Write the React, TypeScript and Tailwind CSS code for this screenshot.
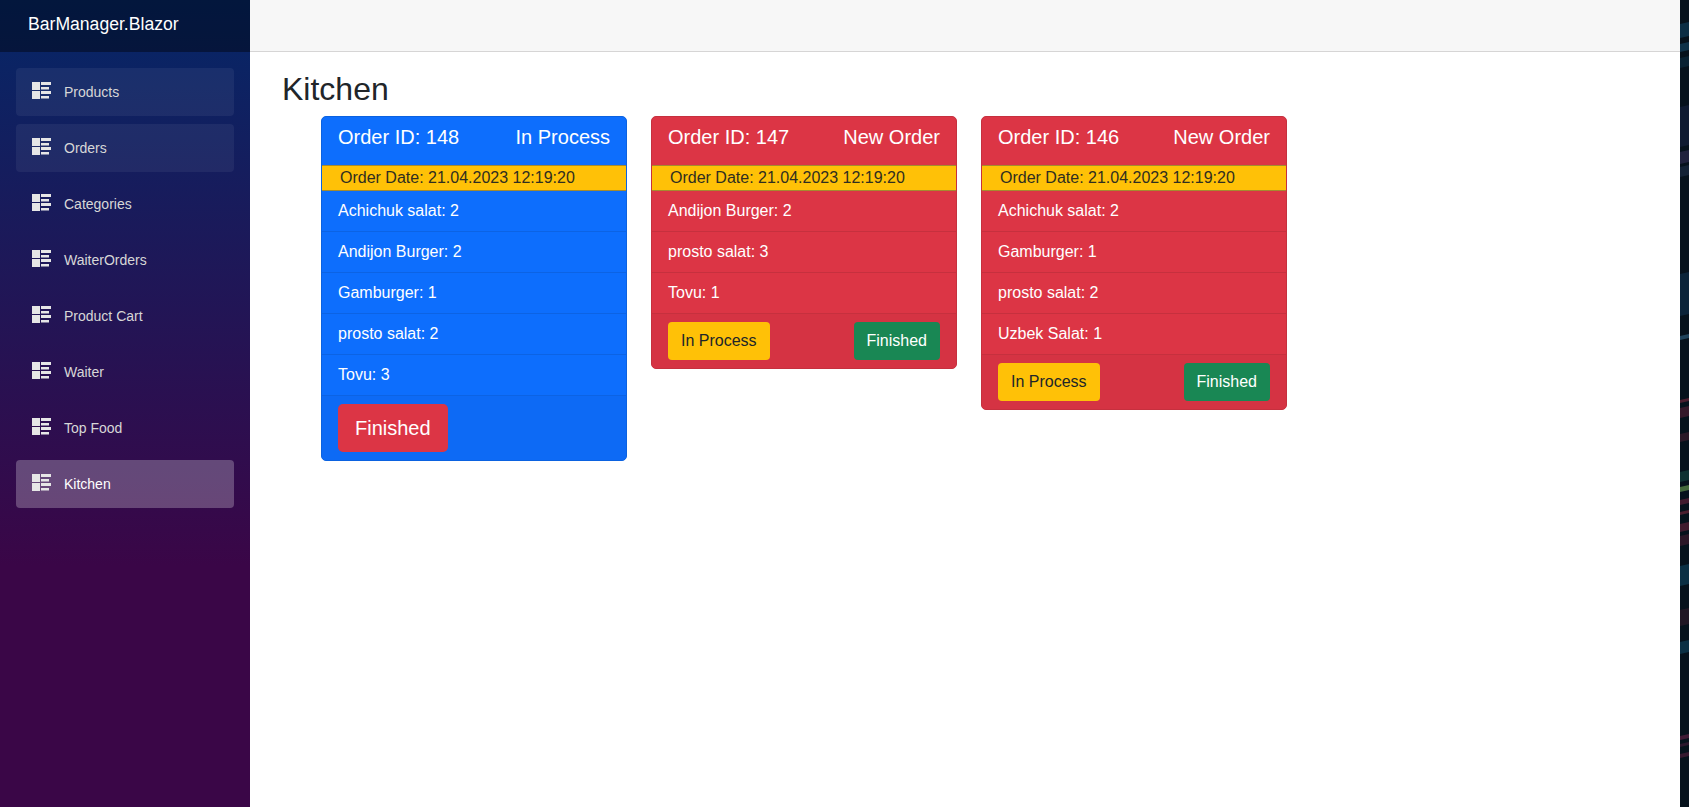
const navItems = ["Products", "Orders", "Categories", "WaiterOrders", "Product Cart", "Waiter", "Top Food", "Kitchen"];

type Order = {
	id: number;
	status: string;
	date: string;
	items: string[];
};

const orders: Order[] = [
	{
		id: 148,
		status: "In Process",
		date: "21.04.2023 12:19:20",
		items: ["Achichuk salat: 2", "Andijon Burger: 2", "Gamburger: 1", "prosto salat: 2", "Tovu: 3"],
	},
	{
		id: 147,
		status: "New Order",
		date: "21.04.2023 12:19:20",
		items: ["Andijon Burger: 2", "prosto salat: 3", "Tovu: 1"],
	},
	{
		id: 146,
		status: "New Order",
		date: "21.04.2023 12:19:20",
		items: ["Achichuk salat: 2", "Gamburger: 1", "prosto salat: 2", "Uzbek Salat: 1"],
	},
];

// streaks of the desktop wallpaper visible at the right edge: [y, height, colour]
const streaks: [number, number, string][] = [
	[22, 14, "#0e3a55"],
	[42, 8, "#12405c"],
	[56, 10, "#0c2a3c"],
	[105, 40, "#141f3a"],
	[150, 12, "#2c2a4c"],
	[165, 10, "#1a2a40"],
	[272, 42, "#0e2c46"],
	[334, 4, "#2c5a78"],
	[398, 3, "#6a2438"],
	[406, 10, "#4a1c30"],
	[432, 8, "#3a1c2c"],
	[470, 10, "#12403c"],
	[485, 5, "#5f8f4a"],
	[498, 5, "#5a2036"],
	[510, 3, "#6a2438"],
	[522, 8, "#5a2036"],
	[534, 10, "#3c1a2c"],
	[564, 20, "#0e3d55"],
	[608, 16, "#2c1a28"],
	[640, 12, "#0e3d55"],
	[734, 4, "#5a2040"],
	[742, 3, "#3c1a34"],
	[752, 4, "#4a1c38"],
];

function ListRichIcon() {
	return (
		<svg viewBox="0 0 19 17" className="h-[17px] w-[19px] shrink-0" fill="currentColor">
			<path d="M0 0h8v8H0zM0 9h8v8H0zM9 0h10v3H9zM9 5h8v2.5H9zM9 9h10v3H9zM9 14h8v2.5H9z" />
		</svg>
	);
}

function WallpaperEdge() {
	return (
		<svg viewBox="0 0 9 807" preserveAspectRatio="none" className="h-[807px] w-[9px]">
			<rect width="9" height="807" fill="#06121c" />
			{streaks.map(([y, h, color]) => (
				<path key={y} d={`M0 ${y + 2}L9 ${y}V${y + h}L0 ${y + h + 2}Z`} fill={color} fillOpacity={0.7} />
			))}
		</svg>
	);
}

function OrderCard({ order }: { order: Order }) {
	const inProcess = order.status === "In Process";
	return (
		<div
			className={`w-[306px] overflow-hidden rounded-[5px] border text-white ${
				inProcess ? "border-[#0b62e0] bg-[#0d6efd]" : "border-[#c6303e] bg-[#dc3545]"
			}`}
		>
			<div className="flex h-[48px] items-start justify-between px-4 pt-[5px] text-[20px] leading-[30px]">
				<span>Order ID: {order.id}</span>
				<span>{order.status}</span>
			</div>
			<div className="h-[26px] border-y border-[#a58a2e] bg-[#ffc107] pl-[18px] text-[16px] leading-[24px] text-[#2f2e20]">
				Order Date: {order.date}
			</div>
			{order.items.map((item) => (
				<div
					key={item}
					className={`h-[41px] border-b px-4 pt-2 text-[16px] leading-[24px] ${
						inProcess ? "border-[#0c63e4]" : "border-[#c6303e]"
					}`}
				>
					{item}
				</div>
			))}
			{inProcess ? (
				<div className="bg-[#0d6af5] px-4 py-2">
					<button className="h-[48px] rounded-[5px] bg-[#dc3545] px-[17px] text-[20px] text-white">Finished</button>
				</div>
			) : (
				<div className="flex justify-between bg-[#d53343] px-4 py-2">
					<button className="h-[38px] rounded bg-[#ffc107] px-[13px] text-[16px] text-[#212529]">In Process</button>
					<button className="h-[38px] rounded bg-[#198754] px-[13px] text-[16px] text-white">Finished</button>
				</div>
			)}
		</div>
	);
}

export default function App() {
	return (
		<div className="flex h-[807px] overflow-hidden bg-white font-['Liberation_Sans',Arial,sans-serif] text-[#212529]">
			{/* Sidebar */}
			<aside className="flex w-[250px] shrink-0 flex-col bg-[linear-gradient(180deg,#052767_0%,#3a0647_70%)]">
				<div className="flex h-[52px] items-center bg-black/40 pb-[3px] pl-7 text-[17.6px] text-white">BarManager.Blazor</div>
				<nav className="flex flex-col gap-2 px-4 pt-4">
					{navItems.map((label, i) => (
						<a
							key={label}
							className={`flex h-[48px] items-center gap-[13px] rounded-[4px] pl-4 text-[14px] ${
								label === "Kitchen"
									? "bg-white/25 text-white"
									: i < 2
										? "bg-white/[0.06] text-[#d7d7d7]"
										: "text-[#d7d7d7]"
							}`}
						>
							<span className="-mt-[4px] text-[#e6e6e6]">
								<ListRichIcon />
							</span>
							{label}
						</a>
					))}
				</nav>
			</aside>

			{/* Main */}
			<main className="flex min-w-0 flex-1 flex-col">
				<div className="h-[52px] border-b border-[#d6d5d5] bg-[#f7f7f7]" />
				<div className="pl-[32px] pt-[18px]">
					<h1 className="text-[32px] leading-[38px] font-normal">Kitchen</h1>
					<div className="ml-[39px] mt-[8px] flex items-start gap-6">
						{orders.map((order) => (
							<OrderCard key={order.id} order={order} />
						))}
					</div>
				</div>
			</main>

			{/* Desktop wallpaper peeking through at the window edge */}
			<div className="w-[9px] shrink-0">
				<WallpaperEdge />
			</div>
		</div>
	);
}
